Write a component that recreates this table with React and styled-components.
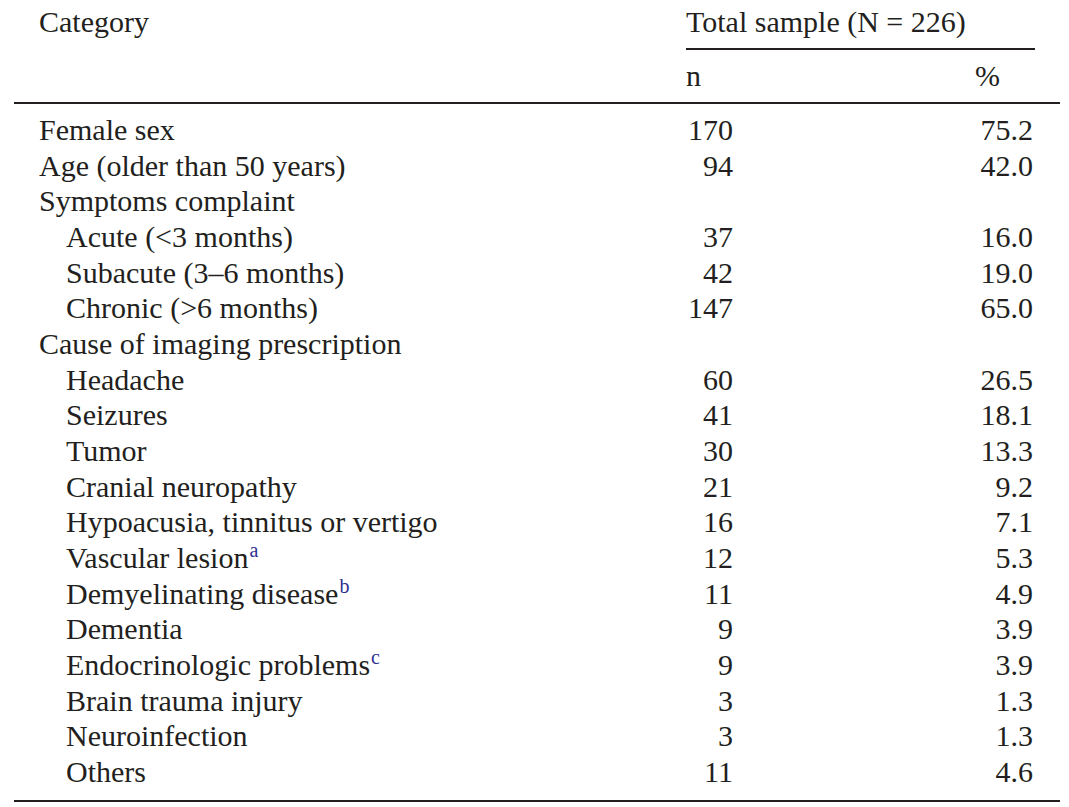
import React from "react";
import styled, { createGlobalStyle } from "styled-components";

const Global = createGlobalStyle`
  html, body { margin: 0; padding: 0; background: #fff; }
  body { font-family: "Liberation Serif", "Times New Roman", serif; color: #231f20; }
`;

const Table = styled.div`
  width: 1046px;
  margin-left: 14px;
  font-size: 30px;
`;

const Head = styled.div`
  display: grid;
  grid-template-columns: 672px 47px 1fr;
  border-bottom: 2px solid #231f20;
`;

const HeadCell = styled.div`
  line-height: 36px;
  padding-left: ${(p) => p.$pl || 0}px;
  padding-top: ${(p) => p.$pt || 0}px;
  padding-bottom: ${(p) => p.$pb || 0}px;
  text-align: ${(p) => p.$align || "left"};
  padding-right: ${(p) => p.$pr || 0}px;
  white-space: nowrap;
`;

const SpanHead = styled(HeadCell)`
  grid-column: 2 / 4;
  margin-right: 25px;
  border-bottom: 2px solid #231f20;
`;

const Body = styled.div`
  padding: 8px 0 11px;
  border-bottom: 2px solid #231f20;
`;

const Row = styled.div`
  display: grid;
  grid-template-columns: 672px 47px 1fr;
  line-height: 35.67px;
  height: 35.67px;
  white-space: nowrap;
`;

const Label = styled.div`
  padding-left: ${(p) => (p.$indent ? 52 : 25)}px;
`;

const Num = styled.div`
  text-align: right;
`;

const Pct = styled.div`
  text-align: right;
  padding-right: 27px;
`;

const Note = styled.sup`
  color: #2e3192;
  font-size: 20px;
  line-height: 0;
  vertical-align: 11px;
  margin-left: 1px;
`;

const rows = [
  ["Female sex", "170", "75.2"],
  ["Age (older than 50 years)", "94", "42.0"],
  ["Symptoms complaint"],
  ["Acute (<3 months)", "37", "16.0", 1],
  ["Subacute (3–6 months)", "42", "19.0", 1],
  ["Chronic (>6 months)", "147", "65.0", 1],
  ["Cause of imaging prescription"],
  ["Headache", "60", "26.5", 1],
  ["Seizures", "41", "18.1", 1],
  ["Tumor", "30", "13.3", 1],
  ["Cranial neuropathy", "21", "9.2", 1],
  ["Hypoacusia, tinnitus or vertigo", "16", "7.1", 1],
  ["Vascular lesion", "12", "5.3", 1, "a"],
  ["Demyelinating disease", "11", "4.9", 1, "b"],
  ["Dementia", "9", "3.9", 1],
  ["Endocrinologic problems", "9", "3.9", 1, "c"],
  ["Brain trauma injury", "3", "1.3", 1],
  ["Neuroinfection", "3", "1.3", 1],
  ["Others", "11", "4.6", 1],
];

export default function App() {
  return (
    <>
      <Global />
      <Table>
        <Head>
          <HeadCell $pl={25} $pt={4}>Category</HeadCell>
          <SpanHead $pt={4} $pb={8}>Total sample (N = 226)</SpanHead>
          <HeadCell />
          <HeadCell $pt={8} $pb={8}>n</HeadCell>
          <HeadCell $pt={8} $pb={8} $align="right" $pr={60}>%</HeadCell>
        </Head>
        <Body>
          {rows.map(([label, n, pct, indent, note], i) => (
            <Row key={i}>
              <Label $indent={indent}>
                {label}
                {note && <Note>{note}</Note>}
              </Label>
              <Num>{n || ""}</Num>
              <Pct>{pct || ""}</Pct>
            </Row>
          ))}
        </Body>
      </Table>
    </>
  );
}
